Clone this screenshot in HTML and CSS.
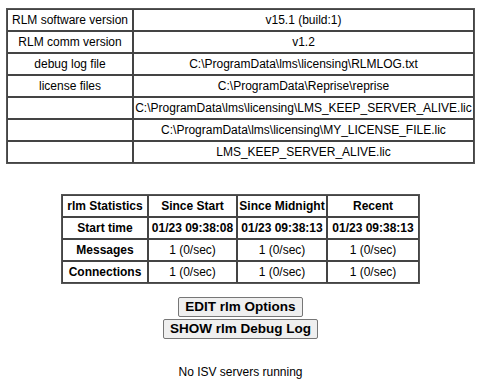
FILE: index.html
```html
<!DOCTYPE html>
<html lang="en">
<head>
    <meta charset="UTF-8">
    <title>RLM Status</title>
    <link rel="stylesheet" href="styles.css">
</head>
<body>
    <table class="info">
        <tr><td class="label">RLM software version</td><td>v15.1 (build:1)</td></tr>
        <tr><td class="label">RLM comm version</td><td>v1.2</td></tr>
        <tr><td class="label">debug log file</td><td>C:\ProgramData\lms\licensing\RLMLOG.txt</td></tr>
        <tr><td class="label">license files</td><td>C:\ProgramData\Reprise\reprise</td></tr>
        <tr><td class="label"></td><td>C:\ProgramData\lms\licensing\LMS_KEEP_SERVER_ALIVE.lic</td></tr>
        <tr><td class="label"></td><td>C:\ProgramData\lms\licensing\MY_LICENSE_FILE.lic</td></tr>
        <tr><td class="label"></td><td>LMS_KEEP_SERVER_ALIVE.lic</td></tr>
    </table>

    <table class="stats">
        <tr class="head">
            <td class="c1">rlm Statistics</td>
            <td class="c2">Since Start</td>
            <td class="c3">Since Midnight</td>
            <td class="c4">Recent</td>
        </tr>
        <tr class="head">
            <td>Start time</td>
            <td>01/23 09:38:08</td>
            <td>01/23 09:38:13</td>
            <td>01/23 09:38:13</td>
        </tr>
        <tr>
            <th>Messages</th>
            <td>1 (0/sec)</td>
            <td>1 (0/sec)</td>
            <td>1 (0/sec)</td>
        </tr>
        <tr>
            <th>Connections</th>
            <td>1 (0/sec)</td>
            <td>1 (0/sec)</td>
            <td>1 (0/sec)</td>
        </tr>
    </table>

    <div class="actions">
        <button>EDIT rlm Options</button>
        <button>SHOW rlm Debug Log</button>
    </div>

    <p class="status">No ISV servers running</p>
</body>
</html>
```

FILE: styles.css
```css
body {
    font-family: "Liberation Sans", Arial, sans-serif;
    font-size: 12px;
    color: #000;
    background-color: #fff;
    margin: 8px 6px;
}

table {
    border: 1px solid #555;
    border-spacing: 0;
    margin: 0 auto;
}

td, th {
    border: 1px solid #444;
    padding: 3px 1px;
    line-height: 14px;
    text-align: center;
    font-size: 12px;
    white-space: nowrap;
}

.info {
    width: 469px;
}

.info .label {
    width: 122px;
}

.stats {
    width: 359px;
    margin-top: 30px;
}

.stats .head td,
.stats th {
    font-weight: bold;
}

.stats .c1 { width: 82px; }
.stats .c2 { width: 85px; }
.stats .c3 { width: 86px; }

.actions {
    display: flex;
    flex-direction: column;
    align-items: center;
    gap: 2px;
    margin-top: 13px;
}

button {
    font-family: "Liberation Sans", Arial, sans-serif;
    font-size: 13.5px;
    font-weight: bold;
    color: #000;
    background-color: #efefef;
    border: 1px solid #767676;
    border-radius: 2px;
    padding: 1px 6px;
    height: 20px;
    line-height: 16px;
}

.status {
    text-align: center;
    margin: 26px 0 0;
    line-height: 14px;
}
```
